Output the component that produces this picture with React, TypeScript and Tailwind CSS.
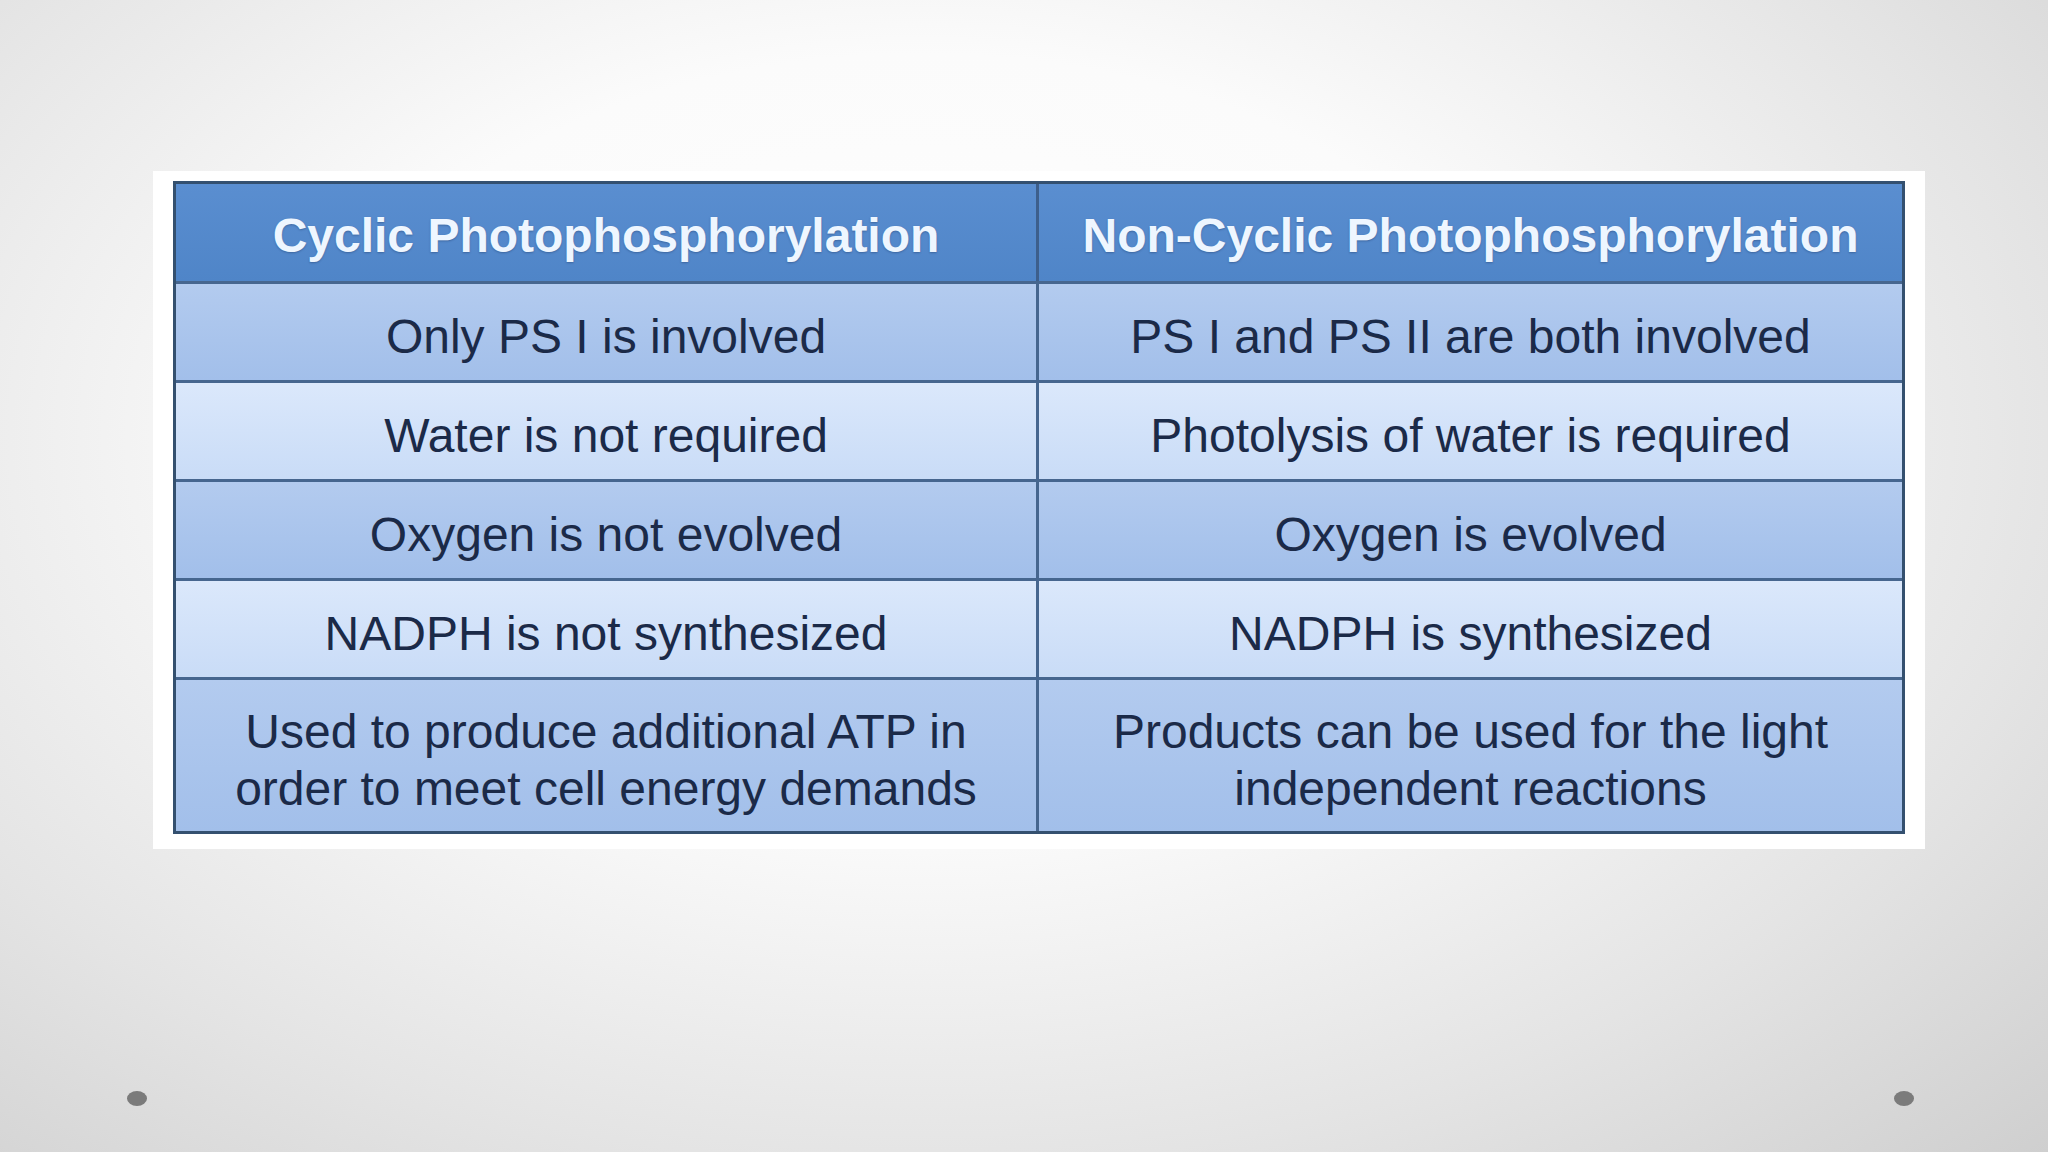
const rows: [string[], string[]][] = [
  [["Only PS I is involved"], ["PS I and PS II are both involved"]],
  [["Water is not required"], ["Photolysis of water is required"]],
  [["Oxygen is not evolved"], ["Oxygen is evolved"]],
  [["NADPH is not synthesized"], ["NADPH is synthesized"]],
  [
    ["Used to produce additional ATP in", "order to meet cell energy demands"],
    ["Products can be used for the light", "independent reactions"],
  ],
];

function Cell({
  lines,
  dark,
  last,
  left,
}: {
  lines: string[];
  dark: boolean;
  last: boolean;
  left: boolean;
}) {
  return (
    <div
      className={`flex flex-col items-center justify-center whitespace-nowrap pt-[8px] text-center text-[48px] leading-[57px] text-[#1b2a48] border-t-[3px] border-[#46668f] ${
        left ? "border-r-[3px]" : ""
      } ${last ? "h-[154px]" : "h-[99px]"} ${
        dark
          ? "bg-gradient-to-b from-[#b3cbef] to-[#a2bfea]"
          : "bg-gradient-to-b from-[#dbe8fb] to-[#c9dcf7]"
      }`}
    >
      {lines.map((l) => (
        <span key={l}>{l}</span>
      ))}
    </div>
  );
}

export default function App() {
  return (
    <div
      className="flex h-[1152px] w-[2048px] flex-col overflow-hidden bg-[radial-gradient(ellipse_at_45%_38%,#ffffff_0%,#fbfbfb_38%,#e4e4e4_72%,#cfcfcf_100%)]"
      style={{ fontFamily: '"Liberation Sans", Arial, sans-serif' }}
    >
      <div className="ml-[153px] mt-[171px] w-[1772px] bg-white px-[20px] pb-[15px] pt-[10px]">
        <div className="border-[3px] border-[#34506f]">
          <div className="grid grid-cols-2">
            <div className="flex h-[97px] items-center justify-center border-r-[3px] border-[#3d5f8c] bg-gradient-to-b from-[#5a8ed0] to-[#4f85c8] pt-[6px] text-[48px] font-bold text-[#eef6ff] [text-shadow:0_1px_2px_rgba(20,40,80,0.35)]">
              Cyclic Photophosphorylation
            </div>
            <div className="flex h-[97px] items-center justify-center bg-gradient-to-b from-[#5a8ed0] to-[#4f85c8] pt-[6px] text-[48px] font-bold text-[#eef6ff] [text-shadow:0_1px_2px_rgba(20,40,80,0.35)]">
              Non-Cyclic Photophosphorylation
            </div>
            {rows.map(([a, b], i) => (
              <div key={i} className="contents">
                <Cell lines={a} dark={i % 2 === 0} last={i === rows.length - 1} left />
                <Cell lines={b} dark={i % 2 === 0} last={i === rows.length - 1} left={false} />
              </div>
            ))}
          </div>
        </div>
      </div>
      <div className="mt-[242px] flex justify-between pl-[127px] pr-[134px]">
        <div className="h-[15px] w-[20px] rounded-[50%] bg-[#7b7b7b]" />
        <div className="h-[15px] w-[20px] rounded-[50%] bg-[#7b7b7b]" />
      </div>
    </div>
  );
}
